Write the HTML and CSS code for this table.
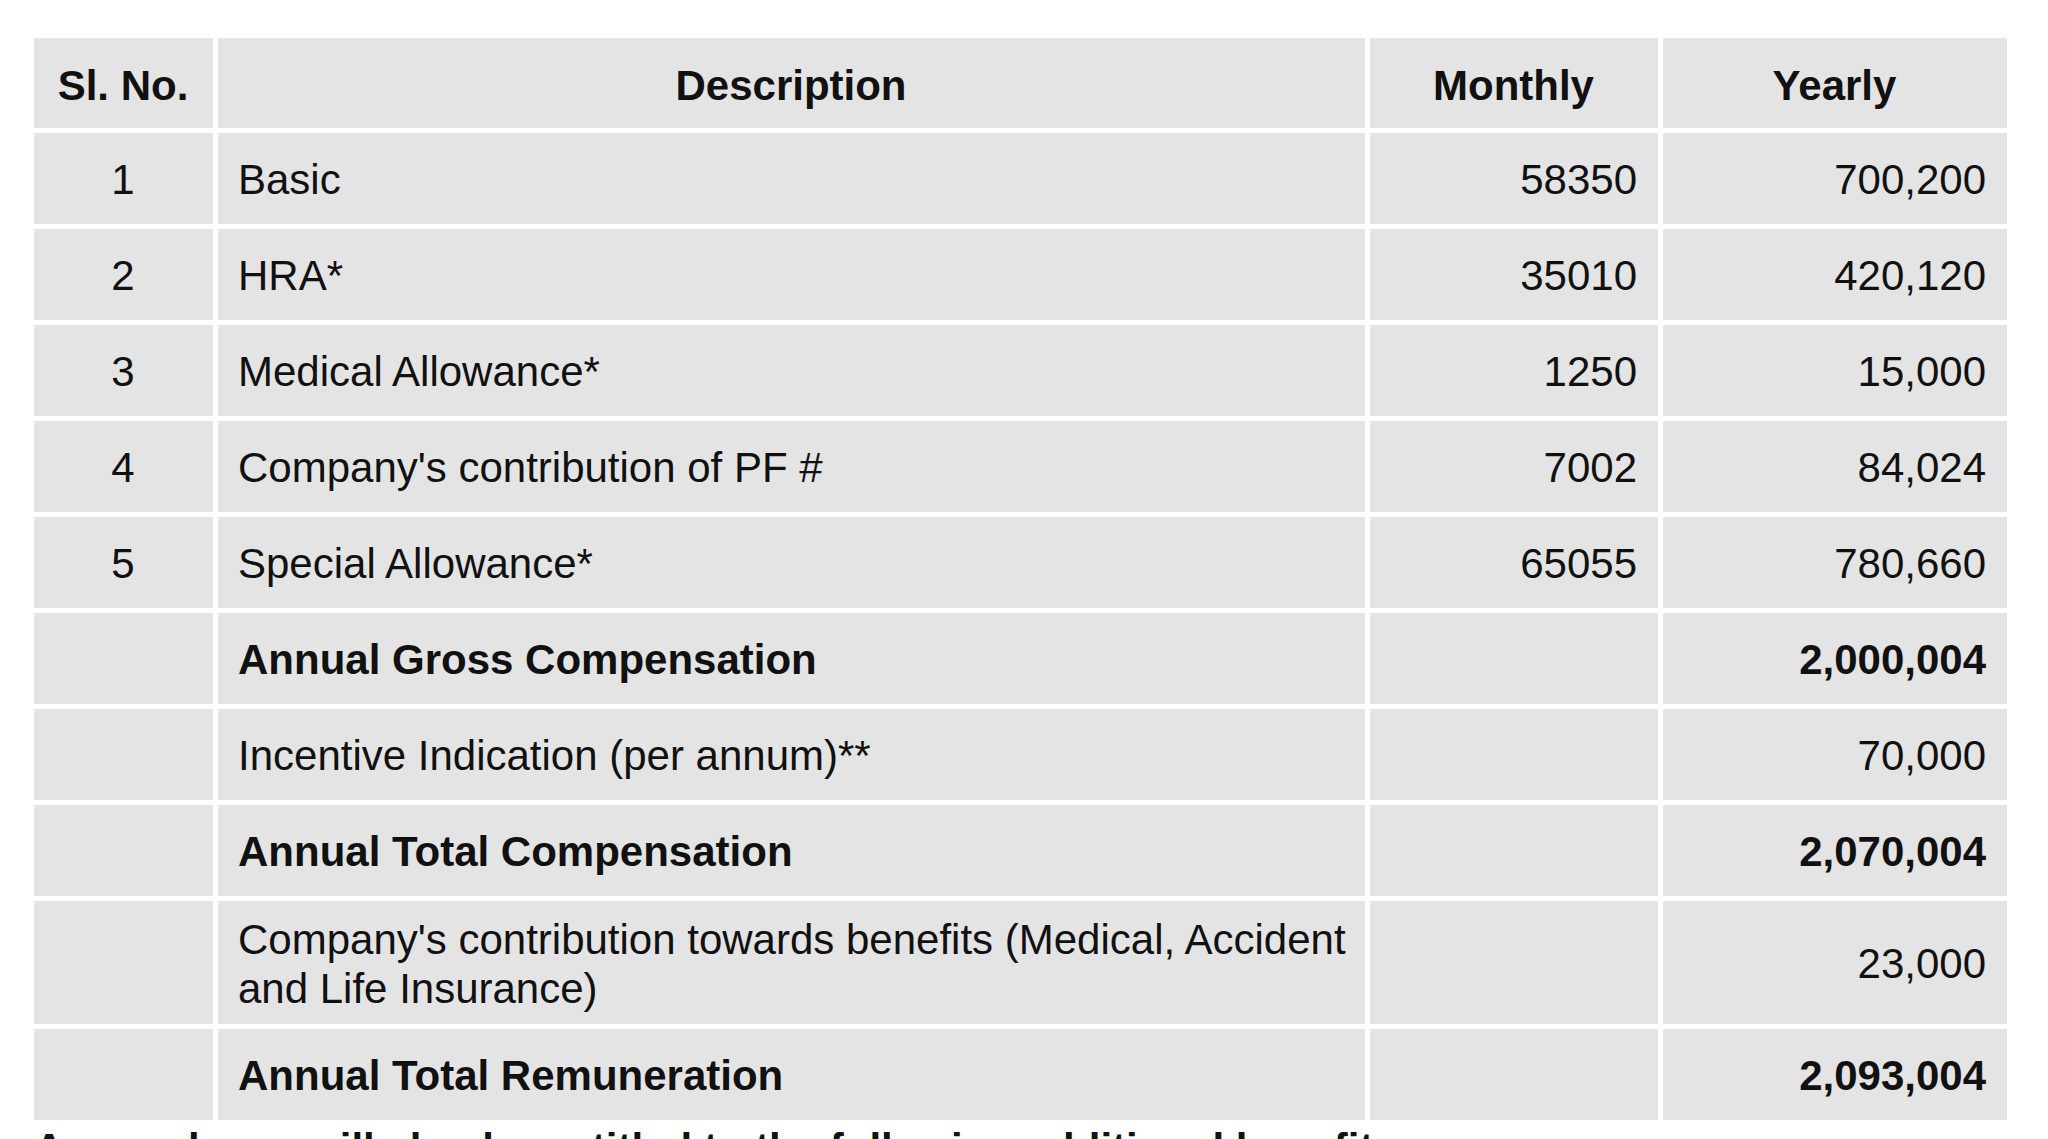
FILE: index.html
```html
<!DOCTYPE html>
<html lang="en">
<head>
<meta charset="utf-8">
<title>Compensation</title>
<link rel="stylesheet" href="styles.css">
</head>
<body>
<table class="comp">
  <colgroup>
    <col class="c-no">
    <col class="c-desc">
    <col class="c-mon">
    <col class="c-year">
  </colgroup>
  <thead>
    <tr class="head">
      <th>Sl. No.</th>
      <th>Description</th>
      <th>Monthly</th>
      <th>Yearly</th>
    </tr>
  </thead>
  <tbody>
    <tr><td class="no">1</td><td class="desc">Basic</td><td class="num">58350</td><td class="num">700,200</td></tr>
    <tr><td class="no">2</td><td class="desc">HRA*</td><td class="num">35010</td><td class="num">420,120</td></tr>
    <tr><td class="no">3</td><td class="desc">Medical Allowance*</td><td class="num">1250</td><td class="num">15,000</td></tr>
    <tr><td class="no">4</td><td class="desc">Company's contribution of PF #</td><td class="num">7002</td><td class="num">84,024</td></tr>
    <tr><td class="no">5</td><td class="desc">Special Allowance*</td><td class="num">65055</td><td class="num">780,660</td></tr>
    <tr class="total"><td class="no"></td><td class="desc">Annual Gross Compensation</td><td class="num"></td><td class="num">2,000,004</td></tr>
    <tr><td class="no"></td><td class="desc">Incentive Indication (per annum)**</td><td class="num"></td><td class="num">70,000</td></tr>
    <tr class="total"><td class="no"></td><td class="desc">Annual Total Compensation</td><td class="num"></td><td class="num">2,070,004</td></tr>
    <tr class="tall"><td class="no"></td><td class="desc">Company's contribution towards benefits (Medical, Accident and Life Insurance)</td><td class="num"></td><td class="num">23,000</td></tr>
    <tr class="total"><td class="no"></td><td class="desc">Annual Total Remuneration</td><td class="num"></td><td class="num">2,093,004</td></tr>
  </tbody>
</table>
<p class="note">An employee will also be entitled to the following additional benefits:</p>
</body>
</html>
```

FILE: styles.css
```css
html, body {
  margin: 0;
  padding: 0;
  background: #ffffff;
}

body {
  font-family: "Liberation Sans", Arial, sans-serif;
  color: #111111;
  overflow: hidden;
  height: 1139px;
}

.comp {
  table-layout: fixed;
  border-collapse: separate;
  border-spacing: 5px 5px;
  width: 1983px;
  margin: 33px 0 0 29px;
  font-size: 42px;
  line-height: 49px;
}

.c-no { width: 179px; }
.c-desc { width: 1147px; }
.c-mon { width: 288px; }
.c-year { width: 344px; }

.comp th,
.comp td {
  background: #e4e4e4;
  padding: 2px 21px 0 20px;
  vertical-align: middle;
}

.comp th {
  font-weight: 700;
  text-align: center;
  padding-top: 4px;
}

.head { height: 90px; }
.comp tbody tr { height: 91px; }
.comp tbody tr.tall { height: 123px; }

.no { text-align: center; }
.comp td.desc {
  text-align: left;
  padding-right: 8px;
}
.num { text-align: right; }

.total td { font-weight: 700; }

.note {
  margin: 3px 0 0 34px;
  font-size: 42px;
  line-height: 41px;
  font-weight: 700;
}
```
